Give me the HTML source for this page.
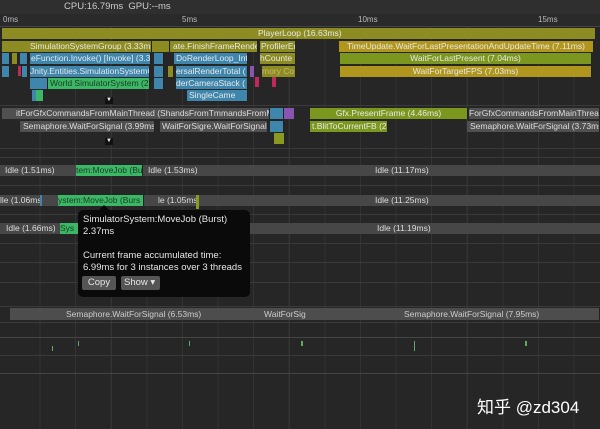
<!DOCTYPE html>
<html><head><style>
body{margin:0;width:600px;height:429px;overflow:hidden;background:#262626;font-family:"Liberation Sans",sans-serif;position:relative}
div{position:absolute;box-sizing:border-box}
.b{height:11px;font-size:8.5px;line-height:11px;color:#e8e8e8;white-space:nowrap;overflow:hidden;border-right:1px solid #222}
.ol{background:#8c8c22}.bl{background:#3f86ad}.gr{background:#3bb866;color:#1e3a22}.or{background:#b0961c}.li{background:#7c971e}.gy{background:#505050;color:#ddd}.id{background:#474747;color:#ddd;border:none}
.c{text-align:center}
.grid{left:0;top:14px;width:600px;height:415px;background:repeating-linear-gradient(90deg,transparent 0 34.5px,#333 34.5px 35.6px);background-position:5px 0}
.hl{left:0;width:600px;height:1px;background:#1a1a1a}
</style></head><body>
<div style="left:0;top:0;width:600px;height:14px;background:#2f2f2f"></div>
<div style="left:64px;top:1px;font-size:9.5px;color:#ccc">CPU:16.79ms&nbsp;&nbsp;GPU:--ms</div>
<div class="grid"></div>
<div style="left:0;top:14px;width:600px;height:13px;background:#2a2a2a;border-bottom:1px solid #444"></div>
<div style="left:3px;top:15px;font-size:8px;color:#bbb">0ms</div>
<div style="left:182px;top:15px;font-size:8px;color:#bbb">5ms</div>
<div style="left:358px;top:15px;font-size:8px;color:#bbb">10ms</div>
<div style="left:538px;top:15px;font-size:8px;color:#bbb">15ms</div>
<div class="b ol" style="left:2px;top:28px;width:594px;padding-left:256px">PlayerLoop (16.63ms)</div>
<div class="b ol" style="left:2px;top:41px;width:150px;padding-left:28px">SimulationSystemGroup (3.33ms</div>
<div class="b ol" style="left:152px;top:41px;width:18px"></div>
<div class="b ol" style="left:170px;top:41px;width:88px;padding-left:3px">ate.FinishFrameRender</div>
<div class="b ol" style="left:260px;top:41px;width:36px;padding-left:1px">ProfilerEn</div>
<div class="b or c" style="left:339px;top:41px;width:255px">TimeUpdate.WaitForLastPresentationAndUpdateTime (7.11ms)</div>
<div class="b bl" style="left:2px;top:53px;width:8px"></div>
<div class="b ol" style="left:12px;top:53px;width:6px"></div>
<div class="b bl" style="left:20px;top:53px;width:8px"></div>
<div class="b bl" style="left:30px;top:53px;width:121px;padding-left:1px">eFunction.Invoke() [Invoke] (3.3</div>
<div class="b bl" style="left:154px;top:53px;width:10px"></div>
<div class="b bl" style="left:174px;top:53px;width:74px;padding-left:2px">DoRenderLoop_Inte</div>
<div class="b ol" style="left:260px;top:53px;width:36px">hCounte</div>
<div class="b li c" style="left:340px;top:53px;width:252px">WaitForLastPresent (7.04ms)</div>
<div class="b bl" style="left:2px;top:66px;width:8px"></div>
<div class="b bl" style="left:22px;top:66px;width:6px"></div>
<div class="b bl" style="left:30px;top:66px;width:120px">Jnity.Entities.SimulationSystemG</div>
<div class="b bl" style="left:154px;top:66px;width:10px"></div>
<div class="b ol" style="left:168px;top:66px;width:6px"></div>
<div class="b bl" style="left:176px;top:66px;width:72px">ersalRenderTotal (</div>
<div style="left:250px;top:66px;width:4px;height:11px;background:#8a55b0"></div>
<div class="b ol" style="left:262px;top:66px;width:34px;color:#c9b870">mory Co</div>
<div class="b or c" style="left:340px;top:66px;width:252px">WaitForTargetFPS (7.03ms)</div>
<div class="b bl" style="left:30px;top:78px;width:18px"></div>
<div class="b gr" style="left:48px;top:78px;width:102px;padding-left:2px">World SimulatorSystem (2</div>
<div class="b bl" style="left:154px;top:78px;width:10px"></div>
<div class="b bl" style="left:176px;top:78px;width:72px">derCameraStack (</div>
<div class="b bl" style="left:32px;top:90px;width:12px"></div>
<div class="b gr" style="left:36px;top:90px;width:8px"></div>
<div class="b bl" style="left:187px;top:90px;width:61px;padding-left:2px">SingleCame</div>
<div style="left:255px;top:77px;width:4px;height:10px;background:#c02a5a"></div>
<div style="left:272px;top:77px;width:4px;height:10px;background:#c02a5a"></div>
<div style="left:18px;top:66px;width:3px;height:10px;background:#c02a5a"></div>
<div style="left:105px;top:97px;width:8px;height:7px;background:#111;color:#eee;font-size:6px;text-align:center">▼</div>
<div class="hl" style="top:105px;background:#3a3a3a"></div>
<div class="b gy" style="left:2px;top:108px;width:268px;padding-left:14px">itForGfxCommandsFromMainThread (ShandsFromTmmandsFromMai</div>
<div class="b bl" style="left:270px;top:108px;width:14px"></div>
<div style="left:284px;top:108px;width:10px;height:11px;background:#8a55b0"></div>
<div class="b li c" style="left:310px;top:108px;width:158px">Gfx.PresentFrame (4.46ms)</div>
<div class="b gy" style="left:469px;top:108px;width:131px">ForGfxCommandsFromMainThread</div>
<div class="b gy" style="left:20px;top:121px;width:135px;padding-left:3px">Semaphore.WaitForSignal (3.99ms)</div>
<div class="b gy" style="left:160px;top:121px;width:108px;padding-left:2px">WaitForSigre.WaitForSignal</div>
<div class="b bl" style="left:270px;top:121px;width:14px"></div>
<div class="b li" style="left:310px;top:121px;width:78px;padding-left:2px">t.BlitToCurrentFB (2</div>
<div class="b gy" style="left:467px;top:121px;width:133px;padding-left:3px">Semaphore.WaitForSignal (3.73ms)</div>
<div style="left:274px;top:133px;width:10px;height:11px;background:#8a9a20"></div>
<div style="left:105px;top:138px;width:8px;height:7px;background:#111;color:#eee;font-size:6px;text-align:center">▼</div>
<div class="hl" style="top:148px;background:#3a3a3a"></div>
<div class="hl" style="top:157px;background:#3a3a3a"></div>
<div class="b id" style="left:0;top:165px;width:600px"></div>
<div class="b id" style="left:2px;top:165px;width:52px;padding-left:3px">Idle (1.51ms)</div>
<div class="b gr" style="left:76px;top:165px;width:67px">tem:MoveJob (Bu</div>
<div class="b id" style="left:148px;top:165px;width:60px">Idle (1.53ms)</div>
<div class="b id" style="left:375px;top:165px;width:80px">Idle (11.17ms)</div>
<div class="hl" style="top:185px;background:#3a3a3a"></div>
<div class="b id" style="left:0;top:195px;width:600px"></div>
<div class="b id" style="left:0;top:195px;width:40px">lle (1.06ms</div>
<div style="left:40px;top:195px;width:2px;height:11px;background:#3f86ad"></div>
<div class="b gr" style="left:58px;top:195px;width:86px">ystem:MoveJob (Burs</div>
<div class="b id" style="left:158px;top:195px;width:38px">le (1.05ms</div>
<div style="left:196px;top:195px;width:3px;height:14px;background:#8a9a20"></div>
<div class="b id" style="left:375px;top:195px;width:80px">Idle (11.25ms)</div>
<div class="hl" style="top:214px;background:#3a3a3a"></div>
<div class="b id" style="left:0;top:223px;width:600px"></div>
<div class="b id" style="left:6px;top:223px;width:50px">Idle (1.66ms)</div>
<div class="b gr" style="left:60px;top:223px;width:20px">Sys</div>
<div class="b id" style="left:377px;top:223px;width:80px">Idle (11.19ms)</div>
<div class="hl" style="top:243px;background:#3a3a3a"></div>
<div class="hl" style="top:262px;background:#3a3a3a"></div>
<div class="hl" style="top:282px;background:#3a3a3a"></div>
<div class="hl" style="top:306px;background:#3a3a3a"></div>
<div class="b gy" style="left:10px;top:308px;width:590px;height:12px;background:#4d4d4d"></div>
<div style="left:66px;top:309px;font-size:8.5px;color:#ccc">Semaphore.WaitForSignal (6.53ms)</div>
<div style="left:264px;top:309px;font-size:8.5px;color:#ccc">WaitForSig</div>
<div style="left:404px;top:309px;font-size:8.5px;color:#ccc">Semaphore.WaitForSignal (7.95ms)</div>
<div class="hl" style="top:322px;background:#3a3a3a"></div>
<div class="hl" style="top:337px;background:#444"></div>
<div class="hl" style="top:355px;background:#3a3a3a"></div>
<div class="hl" style="top:373px;background:#444"></div>
<div style="left:78px;top:341px;width:1px;height:5px;background:#5fa86a"></div>
<div style="left:189px;top:341px;width:1px;height:5px;background:#5fa86a"></div>
<div style="left:301px;top:341px;width:2px;height:5px;background:#5fa86a"></div>
<div style="left:414px;top:341px;width:1px;height:10px;background:#5fa86a"></div>
<div style="left:525px;top:341px;width:2px;height:5px;background:#5fa86a"></div>
<div style="left:52px;top:346px;width:1px;height:5px;background:#5fa86a"></div>
<div style="left:78px;top:210px;width:172px;height:87px;background:#0a0a0a;border-radius:5px;color:#e6e6e6;font-size:9.5px;line-height:12px;padding:4px 5px;white-space:nowrap">
<div style="position:static">SimulatorSystem:MoveJob (Burst)<br>2.37ms<br><br>Current frame accumulated time:<br>6.99ms for 3 instances over 3 threads</div>
<div style="left:4px;top:66px;width:34px;height:14px;background:#555;border-radius:2px;text-align:center;line-height:14px">Copy</div>
<div style="left:43px;top:66px;width:39px;height:14px;background:#555;border-radius:2px;line-height:14px;padding-left:3px">Show ▾</div>
</div>
<div style="left:99px;top:205px;width:0;height:0;border:5px solid transparent;border-bottom-color:#0a0a0a;border-top:0"></div>
<div style="left:477px;top:393px;font-size:17px;color:#fff;font-family:'Liberation Sans','Noto Sans CJK SC',sans-serif">知乎 @zd304</div>
</body></html>
